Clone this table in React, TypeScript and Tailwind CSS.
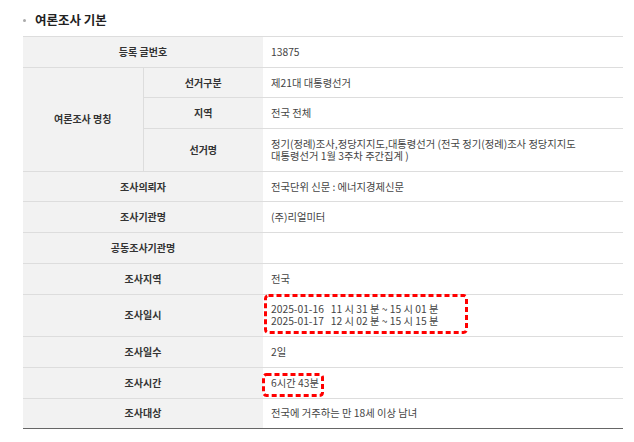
import type { ReactNode } from "react";

const label = "bg-[#f2f2f2] text-center text-[10px] font-bold text-[#333] border-b border-[#ddd] py-[8.85px] leading-[12px]";
const value = "bg-white text-left pl-2 pr-2 text-[10.3px] text-[#444] border-b border-[#ddd] py-[8.85px] leading-[12px]";

function DashedBox({ className }: { className: string }) {
  return (
    <svg className={`pointer-events-none absolute ${className}`} preserveAspectRatio="none">
      <rect x="1.5" y="1.5" width="calc(100% - 3px)" height="calc(100% - 3px)" rx="3" fill="none" stroke="#ff0000" strokeWidth="3" strokeDasharray="5 3" />
    </svg>
  );
}

function Row({ name, children, last }: { name: string; children?: ReactNode; last?: boolean }) {
  return (
    <tr>
      <th colSpan={2} className={`${label} ${last ? "border-b-[#666]" : ""}`}>{name}</th>
      <td className={`${value} ${last ? "border-b-[#666]" : ""}`}>{children}</td>
    </tr>
  );
}

export default function App() {
  return (
    <div className="min-h-[442px] bg-white pl-[23px] pr-[11px] pt-[13px] font-['Noto_Sans_CJK_KR',sans-serif] text-[10px]">
      <div className="flex h-[14px] items-center gap-[9px]">
        <span className="h-[3px] w-[3px] rounded-full bg-[#aaa]" />
        <h2 className="text-[12.5px] font-bold leading-[14px] text-[#222]">여론조사 기본</h2>
      </div>
      <table className="mt-[9px] w-[600px] table-fixed border-collapse border-t border-[#ddd]">
        <colgroup>
          <col className="w-[120px]" />
          <col className="w-[120px]" />
          <col className="w-[360px]" />
        </colgroup>
        <tbody>
          <Row name="등록 글번호">13875</Row>
          <tr>
            <th rowSpan={3} className={`${label} border-r`}>여론조사 명칭</th>
            <th className={label}>선거구분</th>
            <td className={value}>제21대 대통령선거</td>
          </tr>
          <tr>
            <th className={label}>지역</th>
            <td className={value}>전국 전체</td>
          </tr>
          <tr>
            <th className={label}>선거명</th>
            <td className={value}>
              정기(정례)조사,정당지지도,대통령선거 (전국 정기(정례)조사 정당지지도
              <br />
              대통령선거 1월 3주차 주간집계 )
            </td>
          </tr>
          <Row name="조사의뢰자">전국단위 신문 : 에너지경제신문</Row>
          <Row name="조사기관명">(주)리얼미터</Row>
          <Row name="공동조사기관명">{"\u00a0"}</Row>
          <Row name="조사지역">전국</Row>
          <tr>
            <th colSpan={2} className={label}>조사일시</th>
            <td className={`${value} relative`}>
              <span className="whitespace-pre">2025-01-16   11 시 31 분 ~ 15 시 01 분</span>
              <br />
              <span className="whitespace-pre">2025-01-17   12 시 02 분 ~ 15 시 15 분</span>
              <DashedBox className="left-[1px] top-[-1px] h-[40px] w-[204px]" />
            </td>
          </tr>
          <Row name="조사일수">2일</Row>
          <tr>
            <th colSpan={2} className={label}>조사시간</th>
            <td className={`${value} relative`}>
              6시간 43분
              <DashedBox className="left-[-1px] top-[5px] h-[24px] w-[62px]" />
            </td>
          </tr>
          <Row name="조사대상" last>전국에 거주하는 만 18세 이상 남녀</Row>
        </tbody>
      </table>
    </div>
  );
}
